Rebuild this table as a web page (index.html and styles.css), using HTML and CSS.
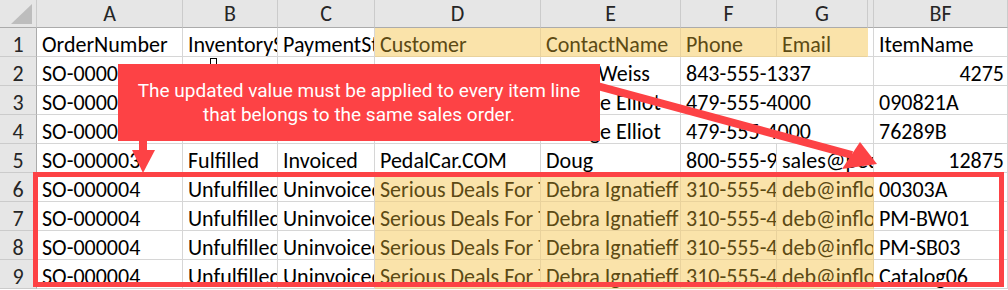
FILE: index.html
```html
<!DOCTYPE html>
<html>
<head>
<meta charset="utf-8">
<link rel="stylesheet" href="styles.css">
</head>
<body>
<div class="page">
  <div class="sheet">
    <div class="ch corner"><svg class="tri" width="22" height="20" viewBox="0 0 22 20"><polygon points="0,20 21,20 21,0" fill="#bdbdbd"/></svg></div>
    <div class="ch">A</div><div class="ch">B</div><div class="ch">C</div><div class="ch">D</div><div class="ch">E</div><div class="ch">F</div><div class="ch">G</div><div class="ch gap"></div><div class="ch">BF</div>

    <div class="rh">1</div>
    <div class="cell">OrderNumber</div><div class="cell">InventoryStatus</div><div class="cell">PaymentStatus</div>
    <div class="cell hl">Customer</div><div class="cell hl">ContactName</div><div class="cell hl">Phone</div><div class="cell hl nob">Email</div><div class="cell gapc"></div>
    <div class="cell">ItemName</div>

    <div class="rh">2</div>
    <div class="cell">SO-000001</div><div class="cell"></div><div class="cell"></div>
    <div class="cell"></div><div class="cell">Mark Weiss</div><div class="cell span3">843-555-1337</div>
    <div class="cell r">4275</div>

    <div class="rh">3</div>
    <div class="cell">SO-000002</div><div class="cell">Fulfilled</div><div class="cell">Invoiced</div>
    <div class="cell">Elliot Bikes</div><div class="cell">George Elliot</div><div class="cell span3">479-555-4000</div>
    <div class="cell">090821A</div>

    <div class="rh">4</div>
    <div class="cell">SO-000002</div><div class="cell">Fulfilled</div><div class="cell">Invoiced</div>
    <div class="cell">Elliot Bikes</div><div class="cell">George Elliot</div><div class="cell span3">479-555-4000</div>
    <div class="cell">76289B</div>

    <div class="rh">5</div>
    <div class="cell">SO-000003</div><div class="cell">Fulfilled</div><div class="cell">Invoiced</div>
    <div class="cell">PedalCar.COM</div><div class="cell">Doug</div><div class="cell">800-555-9100</div><div class="cell span2">sales@pedalcar.com</div>
    <div class="cell r">12875</div>

    <div class="rh">6</div>
    <div class="cell">SO-000004</div><div class="cell">Unfulfilled</div><div class="cell">Uninvoiced</div>
    <div class="cell hl">Serious Deals For Toys</div><div class="cell hl">Debra Ignatieff</div><div class="cell hl">310-555-4400</div><div class="cell hl span2">deb@inflowinventory.com</div>
    <div class="cell">00303A</div>

    <div class="rh">7</div>
    <div class="cell">SO-000004</div><div class="cell">Unfulfilled</div><div class="cell">Uninvoiced</div>
    <div class="cell hl">Serious Deals For Toys</div><div class="cell hl">Debra Ignatieff</div><div class="cell hl">310-555-4400</div><div class="cell hl span2">deb@inflowinventory.com</div>
    <div class="cell">PM-BW01</div>

    <div class="rh">8</div>
    <div class="cell">SO-000004</div><div class="cell">Unfulfilled</div><div class="cell">Uninvoiced</div>
    <div class="cell hl">Serious Deals For Toys</div><div class="cell hl">Debra Ignatieff</div><div class="cell hl">310-555-4400</div><div class="cell hl span2">deb@inflowinventory.com</div>
    <div class="cell">PM-SB03</div>

    <div class="rh">9</div>
    <div class="cell">SO-000004</div><div class="cell">Unfulfilled</div><div class="cell">Uninvoiced</div>
    <div class="cell hl">Serious Deals For Toys</div><div class="cell hl">Debra Ignatieff</div><div class="cell hl">310-555-4400</div><div class="cell hl span2">deb@inflowinventory.com</div>
    <div class="cell">Catalog06</div>
  </div>

  <svg class="overlay" width="1008" height="290" viewBox="0 0 1008 290">
    <rect x="210.5" y="58.5" width="6" height="7" fill="#fff" stroke="#000" stroke-width="1"/>
    <rect x="35.5" y="174.5" width="966" height="110" fill="none" stroke="#fd4245" stroke-width="5"/>
    <rect x="139" y="138" width="8" height="14" fill="#fd4245"/>
    <polygon points="132,150 155,150 143,173" fill="#fd4245"/>
    <line x1="590" y1="84" x2="852" y2="155" stroke="#fd4245" stroke-width="8"/>
    <polygon points="860,142 842,169 877,164" fill="#fd4245"/>
  </svg>

  <div class="callout">
    <span>The updated value must be applied to every item line</span>
    <span>that belongs to the same sales order.</span>
  </div>
</div>
</body>
</html>
```
FILE: styles.css
```css
body {
  margin: 0;
  background: #ffffff;
  font-family: Carlito, Lato, sans-serif;
}

.page {
  position: relative;
  width: 1008px;
  height: 290px;
  overflow: hidden;
}

.sheet {
  display: grid;
  grid-template-columns: 37px 146px 95px 97px 166px 140px 96px 91px 6px 134px;
  grid-template-rows: 28px repeat(9, 29px);
}

.ch,
.rh,
.cell {
  box-sizing: border-box;
  font-size: 22px;
  line-height: 22px;
  white-space: nowrap;
  overflow: hidden;
  display: flex;
}

.ch {
  background: #e6e6e6;
  border-right: 1px solid #cbcbcb;
  border-bottom: 1px solid #ababab;
  justify-content: center;
  align-items: center;
  color: #262626;
}

.corner {
  position: relative;
  justify-content: flex-end;
  align-items: flex-end;
  padding: 0 3px 3px 0;
}

.tri {
  display: block;
}

.rh {
  background: #e6e6e6;
  border-right: 1px solid #ababab;
  border-bottom: 1px solid #cbcbcb;
  justify-content: center;
  align-items: flex-end;
  color: #262626;
}

.cell {
  border-right: 1px solid #d6d6d6;
  border-bottom: 1px solid #d6d6d6;
  align-items: flex-end;
  padding: 0 3px 0 5px;
  color: #000000;
}

.cell.r {
  justify-content: flex-end;
}

.cell.hl {
  background: #fae3aa;
  color: #5c4a14;
  border-right-color: #e9d29c;
  border-bottom-color: #e9d29c;
}

.cell.nob {
  border-right-color: transparent;
}

.cell.gapc {
  padding: 0;
}

.span2 {
  grid-column: span 2;
}

.span3 {
  grid-column: span 3;
}

.overlay {
  position: absolute;
  left: 0;
  top: 0;
}

.callout {
  position: absolute;
  left: 118px;
  top: 64px;
  width: 482px;
  height: 77px;
  box-sizing: border-box;
  padding-top: 15px;
  background: #fd4245;
  color: #ffffff;
  font-family: Roboto, "Liberation Sans", sans-serif;
  font-size: 19px;
  line-height: 23.5px;
  text-align: center;
  display: flex;
  flex-direction: column;
  align-items: center;
}
```
